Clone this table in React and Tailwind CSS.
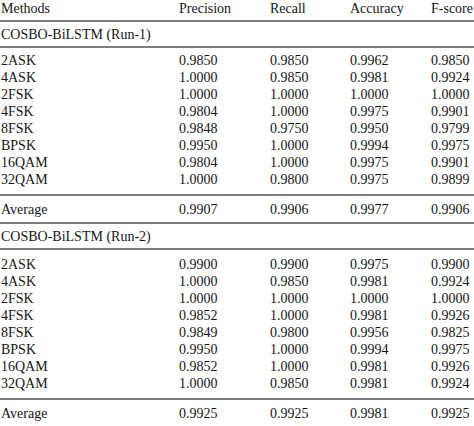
const columns = ["Methods", "Precision", "Recall", "Accuracy", "F-score"]

const sections = [
  {
    title: "COSBO-BiLSTM (Run-1)",
    rows: [
      ["2ASK", "0.9850", "0.9850", "0.9962", "0.9850"],
      ["4ASK", "1.0000", "0.9850", "0.9981", "0.9924"],
      ["2FSK", "1.0000", "1.0000", "1.0000", "1.0000"],
      ["4FSK", "0.9804", "1.0000", "0.9975", "0.9901"],
      ["8FSK", "0.9848", "0.9750", "0.9950", "0.9799"],
      ["BPSK", "0.9950", "1.0000", "0.9994", "0.9975"],
      ["16QAM", "0.9804", "1.0000", "0.9975", "0.9901"],
      ["32QAM", "1.0000", "0.9800", "0.9975", "0.9899"],
    ],
    average: ["Average", "0.9907", "0.9906", "0.9977", "0.9906"],
  },
  {
    title: "COSBO-BiLSTM (Run-2)",
    rows: [
      ["2ASK", "0.9900", "0.9900", "0.9975", "0.9900"],
      ["4ASK", "1.0000", "0.9850", "0.9981", "0.9924"],
      ["2FSK", "1.0000", "1.0000", "1.0000", "1.0000"],
      ["4FSK", "0.9852", "1.0000", "0.9981", "0.9926"],
      ["8FSK", "0.9849", "0.9800", "0.9956", "0.9825"],
      ["BPSK", "0.9950", "1.0000", "0.9994", "0.9975"],
      ["16QAM", "0.9852", "1.0000", "0.9981", "0.9926"],
      ["32QAM", "1.0000", "0.9850", "0.9981", "0.9924"],
    ],
    average: ["Average", "0.9925", "0.9925", "0.9981", "0.9925"],
  },
]

const grid = "grid grid-cols-[179px_91px_80px_81px_80px] whitespace-nowrap"

function Row({ cells, className = "" }) {
  return (
    <div className={`${grid} ${className}`}>
      {cells.map((c, i) => (
        <div key={i} className={i === 0 ? "pl-[1px]" : ""}>{c}</div>
      ))}
    </div>
  )
}

export default function App() {
  return (
    <div
      className="w-[474px] h-[426px] overflow-hidden bg-white text-[#161616] text-[14px] leading-[17px]"
      style={{ fontFamily: '"Liberation Serif", "Times New Roman", serif' }}
    >
      <div className="w-[520px]">
        <Row cells={columns} className="h-[22px] border-b-2 border-[#7d7d7d]" />
        {sections.map((s, si) => (
          <div key={si}>
            <div className="h-[26px] pt-[4px] border-b-2 border-[#7d7d7d] pl-[1px]">{s.title}</div>
            <div className={`${si === 0 ? "pt-[4px]" : "pt-[6px]"} pb-[6px] border-b-2 border-[#7d7d7d]`}>
              {s.rows.map((r, ri) => (
                <Row key={ri} cells={r} className="h-[17px]" />
              ))}
            </div>
            <Row
              cells={s.average}
              className={si === 0 ? "h-[28px] pt-[5px] border-b-2 border-[#7d7d7d]" : "h-[30px] pt-[5px]"}
            />
          </div>
        ))}
      </div>
    </div>
  )
}
